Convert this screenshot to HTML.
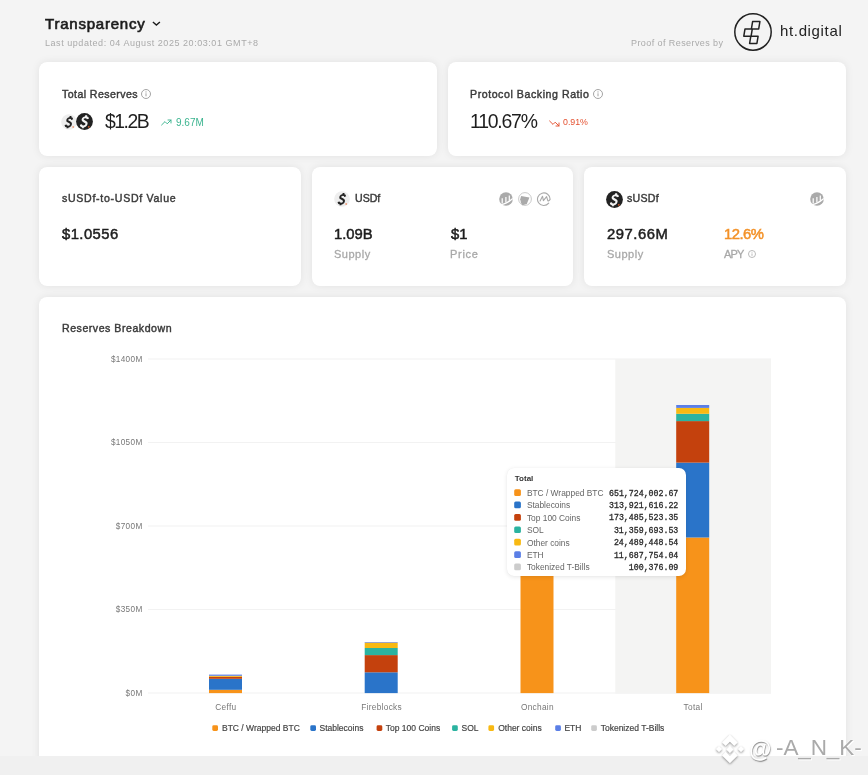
<!DOCTYPE html>
<html><head><meta charset="utf-8">
<style>
*{margin:0;padding:0;box-sizing:border-box}
html,body{-webkit-font-smoothing:antialiased;width:868px;height:775px;overflow:hidden;background:#f4f4f4;font-family:"Liberation Sans",sans-serif;color:#222}
.abs{will-change:transform;position:absolute;white-space:nowrap;line-height:1}
.card{position:absolute;background:#fff;border-radius:8px;box-shadow:0 0 1px rgba(0,0,0,0.03),0 0 9px rgba(0,0,0,0.08)}
.lbl{font-size:10.6px;color:#3a3a3a;-webkit-text-stroke:0.42px #3a3a3a}
.big{font-size:14.8px;color:#1e1e1e;-webkit-text-stroke:0.5px #1e1e1e}
.sub{font-size:11px;color:#a8a8a8;-webkit-text-stroke:0.3px #a8a8a8}
svg{position:absolute;overflow:visible;will-change:transform}
</style></head><body>
<!-- header -->
<div class="abs" style="left:45px;top:15.6px;font-size:15px;color:#1c1c1c;-webkit-text-stroke:0.65px #1c1c1c;letter-spacing:0.78px">Transparency</div>
<svg style="left:152px;top:20px" width="10" height="8" viewBox="0 0 10 8"><path d="M0.9 1.9 L4.4 5.1 L7.9 1.9" fill="none" stroke="#1c1c1c" stroke-width="1.35"/></svg>
<div class="abs" style="left:45px;top:38.9px;font-size:9px;color:#aaa;letter-spacing:0.55px">Last updated: 04 August 2025 20:03:01 GMT+8</div>
<div class="abs" style="left:631px;top:38.8px;font-size:9px;color:#aaa;letter-spacing:0.42px">Proof of Reserves by</div>
<svg style="left:733px;top:12px" width="40" height="40" viewBox="0 0 40 40">
<circle cx="20" cy="20" r="18.2" fill="none" stroke="#222" stroke-width="1.5"/>
<path d="M19.6 9.6 h7.3 l-1.2 7.3 h-7.3 z M12 16.9 h7.3 l-1.2 7.3 h-7.3 z M17.8 24.2 h7.3 l-1.2 7.3 h-7.3 z" fill="none" stroke="#222" stroke-width="1.5" stroke-linejoin="round"/>
</svg>
<div class="abs" style="left:780px;top:23px;font-size:15px;color:#222;letter-spacing:0.65px">ht.digital</div>

<!-- row1 -->
<div class="card" style="left:39px;top:62px;width:398px;height:94px"></div>
<div class="card" style="left:448px;top:62px;width:398px;height:94px"></div>
<div class="abs lbl" style="left:62px;top:89px;letter-spacing:0.42px">Total Reserves</div>
<svg style="left:141px;top:88.6px" width="10" height="10" viewBox="0 0 10 10"><circle cx="5" cy="5" r="4.5" fill="none" stroke="#9a9a9a" stroke-width="0.9"/><path d="M5 4.3 V7.3" stroke="#9a9a9a" stroke-width="0.9"/><circle cx="5" cy="2.9" r="0.55" fill="#9a9a9a"/></svg>
<div class="abs lbl" style="left:470px;top:89px;letter-spacing:0.56px">Protocol Backing Ratio</div>
<svg style="left:593px;top:88.6px" width="10" height="10" viewBox="0 0 10 10"><circle cx="5" cy="5" r="4.5" fill="none" stroke="#9a9a9a" stroke-width="0.9"/><path d="M5 4.3 V7.3" stroke="#9a9a9a" stroke-width="0.9"/><circle cx="5" cy="2.9" r="0.55" fill="#9a9a9a"/></svg>
<!-- coin icons -->
<svg style="left:61px;top:113.5px" width="16" height="16" viewBox="0 0 16 16"><circle cx="8" cy="8" r="7.8" fill="#eeeeee"/><g transform="translate(8 8.2) skewX(-15) translate(-8 -8.2)"><path d="M10.5 5.6 C10.1 4.4 9.2 3.9 8 3.9 C6.6 3.9 5.6 4.8 5.6 5.9 C5.6 8.3 10.5 7.6 10.5 10.4 C10.5 11.7 9.4 12.6 8 12.6 C6.6 12.6 5.6 11.9 5.3 10.8 M8 2.1 V3.9 M8 12.6 V14.3" fill="none" stroke="#222" stroke-width="1.9" stroke-linecap="butt"/></g><circle cx="12.1" cy="13.1" r="0.75" fill="#f0642a"/></svg>
<svg style="left:76.2px;top:113.3px" width="17" height="17" viewBox="0 0 16 16"><circle cx="8" cy="8" r="7.9" fill="#222"/><g transform="translate(8 8.2) skewX(-15) translate(-8 -8.2)"><path d="M10.5 5.6 C10.1 4.4 9.2 3.9 8 3.9 C6.6 3.9 5.6 4.8 5.6 5.9 C5.6 8.3 10.5 7.6 10.5 10.4 C10.5 11.7 9.4 12.6 8 12.6 C6.6 12.6 5.6 11.9 5.3 10.8 M8 2.1 V3.9 M8 12.6 V14.3" fill="none" stroke="#f4f4f4" stroke-width="1.9" stroke-linecap="butt"/></g><circle cx="12.1" cy="13.1" r="0.75" fill="#f0642a"/></svg>
<div class="abs" style="left:105px;top:111.5px;font-size:19.4px;color:#1e1e1e;letter-spacing:-1.5px">$1.2B</div>
<svg style="left:161px;top:119px" width="11" height="7" viewBox="0 0 11 7"><path d="M0.6 6 L4 2.6 L6.2 4.8 L10 1 M7 1 H10 V4" fill="none" stroke="#3bb48f" stroke-width="0.95" stroke-linejoin="round" stroke-linecap="round"/></svg>
<div class="abs" style="left:175.5px;top:118.3px;font-size:10px;color:#3bb48f;letter-spacing:0px">9.67M</div>
<div class="abs" style="left:470px;top:111.5px;font-size:19.4px;color:#1e1e1e;letter-spacing:-1.2px">110.67%</div>
<svg style="left:549px;top:119.5px" width="11" height="7" viewBox="0 0 11 7"><path d="M0.6 1 L4 4.4 L6.2 2.2 L10 6 M7 6 H10 V3" fill="none" stroke="#e4502f" stroke-width="0.95" stroke-linejoin="round" stroke-linecap="round"/></svg>
<div class="abs" style="left:563.3px;top:118.2px;font-size:8.8px;color:#e4502f">0.91%</div>

<!-- row2 -->
<div class="card" style="left:39px;top:167px;width:262px;height:119px"></div>
<div class="card" style="left:312px;top:167px;width:261px;height:119px"></div>
<div class="card" style="left:584px;top:167px;width:262px;height:119px"></div>
<div class="abs lbl" style="left:62px;top:192.8px;letter-spacing:0.7px">sUSDf-to-USDf Value</div>
<div class="abs big" style="left:62px;top:226.9px;letter-spacing:0.45px">$1.0556</div>
<svg style="left:333.8px;top:190.9px" width="16" height="16" viewBox="0 0 16 16"><circle cx="8" cy="8" r="7.8" fill="#eeeeee"/><g transform="translate(8 8.2) skewX(-15) translate(-8 -8.2)"><path d="M10.5 5.6 C10.1 4.4 9.2 3.9 8 3.9 C6.6 3.9 5.6 4.8 5.6 5.9 C5.6 8.3 10.5 7.6 10.5 10.4 C10.5 11.7 9.4 12.6 8 12.6 C6.6 12.6 5.6 11.9 5.3 10.8 M8 2.1 V3.9 M8 12.6 V14.3" fill="none" stroke="#222" stroke-width="1.9" stroke-linecap="butt"/></g><circle cx="12.1" cy="13.1" r="0.75" fill="#f0642a"/></svg>
<div class="abs lbl" style="left:355px;top:192.8px">USDf</div>
<svg style="left:499px;top:192.3px" width="14" height="14" viewBox="0 0 14 14"><circle cx="7" cy="7" r="6.8" fill="#aaa"/><path d="M3.2 11.2 V6.2 M6.9 10.4 V4.9 M10.3 8.8 V3.6" stroke="#fff" stroke-width="1.2"/><path d="M1.2 12.6 Q7.5 12 13.8 6.4" fill="none" stroke="#fff" stroke-width="1.3"/></svg>
<svg style="left:518px;top:192.3px" width="14" height="14" viewBox="0 0 14 14"><circle cx="7" cy="7" r="6.4" fill="none" stroke="#bbb" stroke-width="0.8"/><path d="M3.1 3.9 L11.4 5.6 L8.8 12.1 L4.4 13.3 Q2.6 11 2.2 7.3 Z" fill="#aaa"/></svg>
<svg style="left:537.2px;top:192.3px" width="14" height="14" viewBox="0 0 14 14"><path d="M3.1 8.9 L5.5 4.2 L6.4 8.6 L9.6 4.7 L10.8 8.6 Q11.6 9.6 13.1 7.4 A6.3 6.3 0 1 0 11.7 11.2" fill="none" stroke="#aaa" stroke-width="1.1" stroke-linejoin="round" stroke-linecap="round"/></svg>
<div class="abs big" style="left:334px;top:226.9px;letter-spacing:0px">1.09B</div>
<div class="abs big" style="left:451px;top:226.9px">$1</div>
<div class="abs sub" style="left:334px;top:248.5px;letter-spacing:0.5px">Supply</div>
<div class="abs sub" style="left:450.3px;top:248.5px;letter-spacing:0.7px">Price</div>
<svg style="left:606px;top:190.5px" width="17" height="17" viewBox="0 0 16 16"><circle cx="8" cy="8" r="7.9" fill="#222"/><g transform="translate(8 8.2) skewX(-15) translate(-8 -8.2)"><path d="M10.5 5.6 C10.1 4.4 9.2 3.9 8 3.9 C6.6 3.9 5.6 4.8 5.6 5.9 C5.6 8.3 10.5 7.6 10.5 10.4 C10.5 11.7 9.4 12.6 8 12.6 C6.6 12.6 5.6 11.9 5.3 10.8 M8 2.1 V3.9 M8 12.6 V14.3" fill="none" stroke="#f4f4f4" stroke-width="1.9" stroke-linecap="butt"/></g><circle cx="12.1" cy="13.1" r="0.75" fill="#f0642a"/></svg>
<div class="abs lbl" style="left:627px;top:192.8px;letter-spacing:0.25px">sUSDf</div>
<svg style="left:810px;top:192.3px" width="14" height="14" viewBox="0 0 14 14"><circle cx="7" cy="7" r="6.8" fill="#aaa"/><path d="M3.2 11.2 V6.2 M6.9 10.4 V4.9 M10.3 8.8 V3.6" stroke="#fff" stroke-width="1.2"/><path d="M1.2 12.6 Q7.5 12 13.8 6.4" fill="none" stroke="#fff" stroke-width="1.3"/></svg>
<div class="abs big" style="left:607px;top:226.9px;letter-spacing:0.55px">297.66M</div>
<div class="abs big" style="left:724px;top:226.9px;color:#f39229;-webkit-text-stroke:0.5px #f39229;letter-spacing:-0.5px">12.6%</div>
<div class="abs sub" style="left:607px;top:248.5px;letter-spacing:0.5px">Supply</div>
<div class="abs sub" style="left:724px;top:248.5px;letter-spacing:-0.8px">APY</div>
<svg style="left:747.6px;top:250px" width="8" height="8" viewBox="0 0 10 10"><circle cx="5" cy="5" r="4.4" fill="none" stroke="#aaa" stroke-width="1"/><path d="M5 4.3 V7.3" stroke="#aaa" stroke-width="1"/><circle cx="5" cy="2.9" r="0.6" fill="#aaa"/></svg>

<!-- chart -->
<div class="card" style="left:39px;top:297px;width:807px;height:480px"></div>
<div class="abs lbl" style="left:62px;top:323.2px;letter-spacing:0.52px">Reserves Breakdown</div>
<!--CHART-->
<svg style="left:0;top:0" width="868" height="775" viewBox="0 0 868 775">
<rect x="148" y="358.5" width="623" height="1" fill="#f2f2f2"/>
<rect x="148" y="442.0" width="623" height="1" fill="#f2f2f2"/>
<rect x="148" y="525.5" width="623" height="1" fill="#f2f2f2"/>
<rect x="148" y="609.0" width="623" height="1" fill="#f2f2f2"/>
<rect x="148" y="692.5" width="623" height="1" fill="#f2f2f2"/>
<rect x="615.3" y="359" width="155.7" height="334.5" fill="#f4f4f3"/>
<text x="142.6" y="361.9" text-anchor="end" font-family="Liberation Sans" font-size="8.2px" letter-spacing="0.35px" fill="#777">$1400M</text>
<text x="142.6" y="445.4" text-anchor="end" font-family="Liberation Sans" font-size="8.2px" letter-spacing="0.35px" fill="#777">$1050M</text>
<text x="142.6" y="528.9" text-anchor="end" font-family="Liberation Sans" font-size="8.2px" letter-spacing="0.35px" fill="#777">$700M</text>
<text x="142.6" y="612.4" text-anchor="end" font-family="Liberation Sans" font-size="8.2px" letter-spacing="0.35px" fill="#777">$350M</text>
<text x="142.6" y="695.9" text-anchor="end" font-family="Liberation Sans" font-size="8.2px" letter-spacing="0.35px" fill="#777">$0M</text>
<rect x="209.0" y="689.80" width="33" height="3.30" fill="#f7931a"/>
<rect x="209.0" y="678.80" width="33" height="11.00" fill="#2a74c9"/>
<rect x="209.0" y="676.80" width="33" height="2.00" fill="#c4410d"/>
<rect x="209.0" y="675.80" width="33" height="1.00" fill="#f8b912"/>
<rect x="209.0" y="674.60" width="33" height="1.20" fill="#5b7fe6"/>
<rect x="364.7" y="672.30" width="33" height="20.80" fill="#2a74c9"/>
<rect x="364.7" y="655.10" width="33" height="17.20" fill="#c4410d"/>
<rect x="364.7" y="648.00" width="33" height="7.10" fill="#2bb3a0"/>
<rect x="364.7" y="642.60" width="33" height="5.40" fill="#f8b912"/>
<rect x="364.7" y="642.00" width="33" height="0.60" fill="#5b7fe6"/>
<rect x="520.5" y="543.10" width="33" height="150.00" fill="#f7931a"/>
<rect x="676.2" y="537.50" width="33" height="155.60" fill="#f7931a"/>
<rect x="676.2" y="462.60" width="33" height="74.90" fill="#2a74c9"/>
<rect x="676.2" y="421.10" width="33" height="41.50" fill="#c4410d"/>
<rect x="676.2" y="413.80" width="33" height="7.30" fill="#2bb3a0"/>
<rect x="676.2" y="407.90" width="33" height="5.90" fill="#f8b912"/>
<rect x="676.2" y="405.00" width="33" height="2.90" fill="#5b7fe6"/>
<text x="225.9" y="710.4" text-anchor="middle" font-family="Liberation Sans" font-size="8.3px" letter-spacing="0.3px" fill="#777">Ceffu</text>
<text x="381.6" y="710.4" text-anchor="middle" font-family="Liberation Sans" font-size="8.3px" letter-spacing="0.3px" fill="#777">Fireblocks</text>
<text x="537.4" y="710.4" text-anchor="middle" font-family="Liberation Sans" font-size="8.3px" letter-spacing="0.3px" fill="#777">Onchain</text>
<text x="693.1" y="710.4" text-anchor="middle" font-family="Liberation Sans" font-size="8.3px" letter-spacing="0.3px" fill="#777">Total</text>
<rect x="212.3" y="725.3" width="5.7" height="5.7" rx="1.4" fill="#f7931a"/>
<text x="222" y="731" font-family="Liberation Sans" font-size="8.5px" fill="#444" stroke="#444" stroke-width="0.18">BTC / Wrapped BTC</text>
<rect x="310.3" y="725.3" width="5.7" height="5.7" rx="1.4" fill="#2a74c9"/>
<text x="319.5" y="731" font-family="Liberation Sans" font-size="8.5px" fill="#444" stroke="#444" stroke-width="0.18">Stablecoins</text>
<rect x="376.6" y="725.3" width="5.7" height="5.7" rx="1.4" fill="#c4410d"/>
<text x="385.8" y="731" font-family="Liberation Sans" font-size="8.5px" fill="#444" stroke="#444" stroke-width="0.18">Top 100 Coins</text>
<rect x="452.1" y="725.3" width="5.7" height="5.7" rx="1.4" fill="#2bb3a0"/>
<text x="461.6" y="731" font-family="Liberation Sans" font-size="8.5px" fill="#444" stroke="#444" stroke-width="0.18">SOL</text>
<rect x="488.4" y="725.3" width="5.7" height="5.7" rx="1.4" fill="#f8b912"/>
<text x="498.2" y="731" font-family="Liberation Sans" font-size="8.5px" fill="#444" stroke="#444" stroke-width="0.18">Other coins</text>
<rect x="555.2" y="725.3" width="5.7" height="5.7" rx="1.4" fill="#5b7fe6"/>
<text x="564.4" y="731" font-family="Liberation Sans" font-size="8.5px" fill="#444" stroke="#444" stroke-width="0.18">ETH</text>
<rect x="591.2" y="725.3" width="5.7" height="5.7" rx="1.4" fill="#cccccc"/>
<text x="600.7" y="731" font-family="Liberation Sans" font-size="8.5px" fill="#444" stroke="#444" stroke-width="0.18">Tokenized T-Bills</text>
</svg>
<div style="position:absolute;left:507.3px;top:468px;width:179px;height:107.5px;background:#fff;border-radius:7px;box-shadow:0 1px 4px rgba(0,0,0,0.10),0 0 1px rgba(0,0,0,0.08)"></div>
<svg style="left:0;top:0" width="868" height="775" viewBox="0 0 868 775">
<text x="514.8" y="480.9" font-family="Liberation Sans" font-weight="bold" font-size="8px" fill="#333">Total</text>
<rect x="514.2" y="489.20" width="6.7" height="6.7" rx="1.5" fill="#f7931a"/>
<text x="526.9" y="495.90" font-family="Liberation Sans" font-size="8.4px" fill="#666">BTC / Wrapped BTC</text>
<text x="678.3" y="495.50" text-anchor="end" font-family="Liberation Mono" font-size="8.25px" fill="#2a2a2a" stroke="#2a2a2a" stroke-width="0.3">651,724,002.67</text>
<rect x="514.2" y="501.60" width="6.7" height="6.7" rx="1.5" fill="#2a74c9"/>
<text x="526.9" y="508.30" font-family="Liberation Sans" font-size="8.4px" fill="#666">Stablecoins</text>
<text x="678.3" y="507.90" text-anchor="end" font-family="Liberation Mono" font-size="8.25px" fill="#2a2a2a" stroke="#2a2a2a" stroke-width="0.3">313,921,616.22</text>
<rect x="514.2" y="514.00" width="6.7" height="6.7" rx="1.5" fill="#c4410d"/>
<text x="526.9" y="520.70" font-family="Liberation Sans" font-size="8.4px" fill="#666">Top 100 Coins</text>
<text x="678.3" y="520.30" text-anchor="end" font-family="Liberation Mono" font-size="8.25px" fill="#2a2a2a" stroke="#2a2a2a" stroke-width="0.3">173,485,523.35</text>
<rect x="514.2" y="526.40" width="6.7" height="6.7" rx="1.5" fill="#2bb3a0"/>
<text x="526.9" y="533.10" font-family="Liberation Sans" font-size="8.4px" fill="#666">SOL</text>
<text x="678.3" y="532.70" text-anchor="end" font-family="Liberation Mono" font-size="8.25px" fill="#2a2a2a" stroke="#2a2a2a" stroke-width="0.3">31,359,693.53</text>
<rect x="514.2" y="538.80" width="6.7" height="6.7" rx="1.5" fill="#f8b912"/>
<text x="526.9" y="545.50" font-family="Liberation Sans" font-size="8.4px" fill="#666">Other coins</text>
<text x="678.3" y="545.10" text-anchor="end" font-family="Liberation Mono" font-size="8.25px" fill="#2a2a2a" stroke="#2a2a2a" stroke-width="0.3">24,489,448.54</text>
<rect x="514.2" y="551.20" width="6.7" height="6.7" rx="1.5" fill="#5b7fe6"/>
<text x="526.9" y="557.90" font-family="Liberation Sans" font-size="8.4px" fill="#666">ETH</text>
<text x="678.3" y="557.50" text-anchor="end" font-family="Liberation Mono" font-size="8.25px" fill="#2a2a2a" stroke="#2a2a2a" stroke-width="0.3">11,687,754.04</text>
<rect x="514.2" y="563.60" width="6.7" height="6.7" rx="1.5" fill="#cccccc"/>
<text x="526.9" y="570.30" font-family="Liberation Sans" font-size="8.4px" fill="#666">Tokenized T-Bills</text>
<text x="678.3" y="569.90" text-anchor="end" font-family="Liberation Mono" font-size="8.25px" fill="#2a2a2a" stroke="#2a2a2a" stroke-width="0.3">100,376.09</text>
</svg>
<!--/CHART-->
<div style="position:absolute;left:0;top:756px;width:868px;height:19px;background:#f0f0f0"></div>
<!--WM-->
<svg style="left:713px;top:733px" width="34" height="32" viewBox="0 0 34 32">
<g fill="#fff" style="filter:drop-shadow(0.5px 1px 1px rgba(0,0,0,.42))">
<path d="M16.9 1.6 L24.8 9.5 L21.2 13.1 L16.9 8.8 L12.6 13.1 L9 9.5 Z"/>
<path d="M6 12.9 L9.2 16.1 L6 19.3 L2.8 16.1 Z"/>
<path d="M28 12.9 L31.2 16.1 L28 19.3 L24.8 16.1 Z"/>
<path d="M16.9 12.8 L20.6 16.5 L16.9 20.2 L13.2 16.5 Z"/>
<path d="M16.9 30.3 L9 22.4 L12.6 18.8 L16.9 23.1 L21.2 18.8 L24.8 22.4 Z"/>
</g></svg>
<div class="abs" style="left:749px;top:737.5px;font-size:23px;font-weight:bold;color:#fff;text-shadow:0.5px 1px 1.2px rgba(0,0,0,.5)">@</div>
<div class="abs" style="left:776px;top:737px;font-size:22.5px;color:#aaa;letter-spacing:-0.1px;text-shadow:0 0 1px #fff,0 0 1px #fff,1px 1px 0 #fff">-A_N_K-</div>
<!--/WM-->
</body></html>
